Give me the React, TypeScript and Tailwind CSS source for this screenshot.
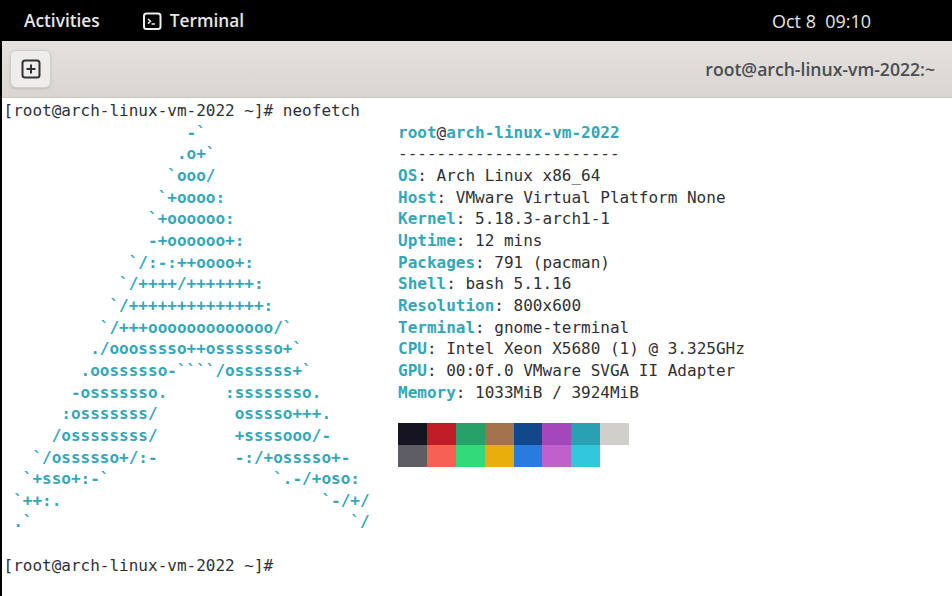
const LOGO = [
  '                   -`',
  '                  .o+`',
  '                 `ooo/',
  '                `+oooo:',
  '               `+oooooo:',
  '               -+oooooo+:',
  '             `/:-:++oooo+:',
  '            `/++++/+++++++:',
  '           `/++++++++++++++:',
  '          `/+++ooooooooooooo/`',
  '         ./ooosssso++osssssso+`',
  '        .oossssso-````/ossssss+`',
  '       -osssssso.      :ssssssso.',
  '      :osssssss/        osssso+++.',
  '     /ossssssss/        +ssssooo/-',
  '   `/ossssso+/:-        -:/+osssso+-',
  '  `+sso+:-`                 `.-/+oso:',
  ' `++:.                           `-/+/',
  ' .`                                 `/',
];

const INFO: [string, string][] = [
  ['OS', 'Arch Linux x86_64'],
  ['Host', 'VMware Virtual Platform None'],
  ['Kernel', '5.18.3-arch1-1'],
  ['Uptime', '12 mins'],
  ['Packages', '791 (pacman)'],
  ['Shell', 'bash 5.1.16'],
  ['Resolution', '800x600'],
  ['Terminal', 'gnome-terminal'],
  ['CPU', 'Intel Xeon X5680 (1) @ 3.325GHz'],
  ['GPU', '00:0f.0 VMware SVGA II Adapter'],
  ['Memory', '1033MiB / 3924MiB'],
];

const DARK = ['#171421', '#c01c28', '#26a269', '#a2734c', '#12488b', '#a347ba', '#2aa1b3', '#d0cfcc'];
const BRIGHT = ['#5e5c64', '#f66151', '#33da7a', '#e9ad0c', '#2a7bde', '#c061cb', '#33c7de'];

function Line({ children }: { children?: React.ReactNode }) {
  return <div className="h-[21.67px] leading-[21.67px] whitespace-pre">{children}</div>;
}

export default function App() {
  return (
    <div className="w-[952px] h-[596px] overflow-hidden flex flex-col bg-black font-['Open_Sans',sans-serif]">
      {/* GNOME top bar */}
      <div className="h-[41px] shrink-0 flex items-center pt-px text-[#e6e6e6] text-[17.3px] font-semibold">
        <span className="ml-6">Activities</span>
        <div className="ml-[43px] flex items-center gap-[8px]">
          <svg width="19" height="19" viewBox="0 0 19 19" fill="none" stroke="#eeeeee">
            <rect x="1" y="1.5" width="16.5" height="15.5" rx="2.5" strokeWidth="2" />
            <path d="M5 7l2.5 2.3L5 11.6M8.5 12h3.5" strokeWidth="1.5" />
          </svg>
          <span>Terminal</span>
        </div>
        <span className="ml-auto mr-[81px] text-[17.95px] font-medium whitespace-pre">Oct 8  09:10</span>
      </div>

      <div className="flex-1 ml-[2px] flex flex-col min-h-0">
        {/* header bar */}
        <div className="h-[57px] shrink-0 flex items-center justify-between bg-gradient-to-b from-[#e4e1de] to-[#d9d6d2] border-b border-[#c9c6c2] pl-2 pr-[17px]">
          <button className="w-[41px] h-[38px] rounded-[6px] bg-[#efedeb] border border-[#d2cfcb] shadow-sm flex items-center justify-center">
            <svg width="20" height="20" viewBox="0 0 20 20" fill="none" stroke="#2e3436">
              <rect x="1.5" y="1.5" width="17" height="17" rx="2.5" strokeWidth="2" />
              <path d="M10 5.5v9M5.5 10h9" strokeWidth="2" />
            </svg>
          </button>
          <span className="text-[17.6px] font-semibold text-[#4a4d4f]">root@arch-linux-vm-2022:~</span>
        </div>

        {/* terminal */}
        <div className="flex-1 bg-white pl-[1.5px] pt-[2px] text-[#303034] text-[16px] font-['DejaVu_Sans_Mono',monospace]">
          <Line>[root@arch-linux-vm-2022 ~]# neofetch</Line>
          <div className="flex">
            <div className="w-[394.5px] shrink-0 text-[#33a7b8] font-bold">
              {LOGO.map((l, i) => (
                <Line key={i}>{l}</Line>
              ))}
            </div>
            <div className="flex-1">
              <Line>
                <span className="text-[#33a7b8] font-bold">root</span>@
                <span className="text-[#33a7b8] font-bold">arch-linux-vm-2022</span>
              </Line>
              <Line>-----------------------</Line>
              {INFO.map(([k, v]) => (
                <Line key={k}>
                  <span className="text-[#33a7b8] font-bold">{k}</span>: {v}
                </Line>
              ))}
              <div className="h-[20px]" />
              <div className="flex">
                {DARK.map(c => (
                  <div key={c} className="w-[28.9px] h-[21.67px]" style={{ backgroundColor: c }} />
                ))}
              </div>
              <div className="flex">
                {BRIGHT.map(c => (
                  <div key={c} className="w-[28.9px] h-[21.67px]" style={{ backgroundColor: c }} />
                ))}
              </div>
            </div>
          </div>
          <Line />
          <Line>[root@arch-linux-vm-2022 ~]#</Line>
        </div>
      </div>
    </div>
  );
}
